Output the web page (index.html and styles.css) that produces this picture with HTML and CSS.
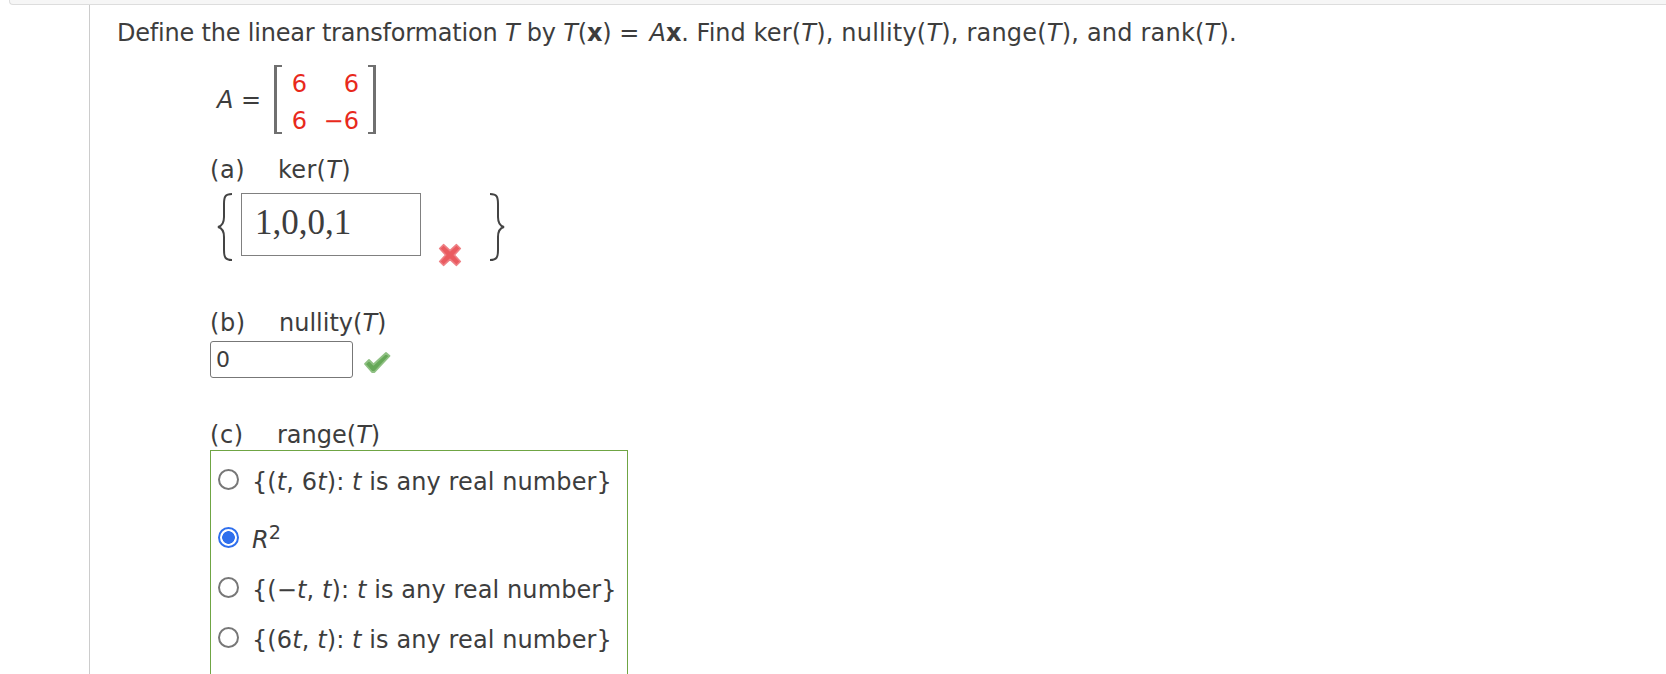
FILE: index.html
```html
<!DOCTYPE html>
<html lang="en">
<head>
    <meta charset="UTF-8">
    <title>Linear transformation</title>
    <link rel="stylesheet" href="styles.css">
</head>
<body>
    <div class="top-strip"></div>
    <main class="question">
        <p class="prompt"><span class="tight">Define the linear transformation <i>T</i> by <i>T</i>(<b>x</b>)</span><span class="eq">=</span><i>A</i><b>x</b>. Find <span class="loose">ker(<i>T</i>), nullity(<i>T</i>), range(<i>T</i>), and rank(<i>T</i>).</span></p>

        <div class="matrix-row">
            <span class="matrix-name"><i>A</i> =</span>
            <div class="matrix">
                <span>6</span><span>6</span>
                <span>6</span><span>&minus;6</span>
            </div>
        </div>

        <p class="part part-a"><span class="part-letter">(a)</span><span class="part-name">ker(<i>T</i>)</span></p>
        <div class="set-row">
            <svg class="brace" viewBox="0 0 16 68" width="16" height="68">
                <path d="M15 1C8 1 7 4 7 11V24C7 30 5 33 1 34C5 35 7 38 7 44V57C7 64 8 67 15 67" fill="none" stroke="#444" stroke-width="2"/>
            </svg>
            <input class="answer-big" type="text" value="1,0,0,1">
            <svg class="mark-x" viewBox="0 0 24 24" width="26" height="26">
                <path d="M2.500 6L6 2.500L12 8L18 2.500L21.500 6L16 12L21.500 18L18 21.500L12 16L6 21.500L2.500 18L8 12Z" fill="#ea5b60" stroke="#ee7f84" stroke-width="1.500" stroke-linejoin="round"/>
            </svg>
            <svg class="brace brace-right" viewBox="0 0 16 68" width="16" height="68">
                <path d="M1 1C8 1 9 4 9 11V24C9 30 11 33 15 34C11 35 9 38 9 44V57C9 64 8 67 1 67" fill="none" stroke="#444" stroke-width="2"/>
            </svg>
        </div>

        <p class="part part-b"><span class="part-letter">(b)</span>nullity(<i>T</i>)</p>
        <div class="nullity-row">
            <input class="answer-small" type="text" value="0">
            <svg class="mark-check" viewBox="0 0 28 23" width="28" height="23">
                <path d="M2 13L6 9L10.500 13.500L23 2L26.500 5L11.500 21H9Z" fill="#66a858" stroke="#8fc083" stroke-width="1.800" stroke-linejoin="round"/>
            </svg>
        </div>

        <p class="part part-c"><span class="part-letter">(c)</span>range(<i>T</i>)</p>
        <div class="choices">
            <label class="choice"><input type="radio" name="range"><span>{(<i>t</i>, 6<i>t</i>): <i>t</i> is any real number}</span></label>
            <label class="choice choice-r"><input type="radio" name="range" checked><span><i>R</i><sup>2</sup></span></label>
            <label class="choice"><input type="radio" name="range"><span>{(&minus;<i>t</i>, <i>t</i>): <i>t</i> is any real number}</span></label>
            <label class="choice"><input type="radio" name="range"><span>{(6<i>t</i>, <i>t</i>): <i>t</i> is any real number}</span></label>
        </div>
    </main>
</body>
</html>
```

FILE: styles.css
```css
html {
    box-sizing: border-box;
    font-family: "DejaVu Sans", sans-serif;
    font-size: 24px;
    color: #3d3d3d;
}

*,
*:before,
*:after {
    box-sizing: inherit;
}

body {
    margin: 0;
    height: 100vh;
    overflow: hidden;
    background: #fff;
}

p {
    margin: 0;
}

.top-strip {
    height: 5px;
    margin-left: 9px;
    background: #f6f6f6;
    border-bottom: 1px solid #ddd;
    border-left: 1px solid #ddd;
    border-bottom-left-radius: 4px;
}

.question {
    margin-left: 89px;
    height: 669px;
    padding: 14px 0 0 27px;
    border-left: 1px solid #ccc;
}

.prompt {
    line-height: 28px;
}

.tight {
    letter-spacing: -.2px;
}

.eq {
    margin: 0 10px 0 8px;
}

.loose {
    letter-spacing: .2px;
}

.matrix-row {
    display: flex;
    align-items: center;
    margin: 18px 0 0 100px;
}

.matrix-name {
    width: 57px;
}

.matrix {
    position: relative;
    display: grid;
    grid-template-columns: 33px 52px;
    justify-items: end;
    width: 102px;
    height: 69px;
    padding-top: 7px;
    line-height: 37px;
    color: #e8291c;
    align-content: center;
}

.matrix:before,
.matrix:after {
    content: "";
    position: absolute;
    top: 0;
    bottom: 0;
    width: 8px;
    border: solid #707070;
    border-width: 2px 0 2px 3px;
}

.matrix:before {
    left: 0;
}

.matrix:after {
    right: 0;
    border-width: 2px 3px 2px 0;
}

.part {
    line-height: 28px;
    margin-left: 93px;
}

.part-letter {
    display: inline-block;
    letter-spacing: .6px;
}

.part-name {
    letter-spacing: .3px;
}

.part-a {
    margin-top: 22px;
}

.part-a .part-letter {
    width: 68px;
}

.part-b .part-letter {
    width: 69px;
}

.part-c .part-letter {
    width: 67px;
}

.set-row {
    display: flex;
    align-items: flex-start;
    margin: 9px 0 0 100px;
}

.answer-big {
    width: 180px;
    height: 63px;
    margin-left: 8px;
    padding: 0 0 4px 13px;
    border: 1px solid #808080;
    border-radius: 0;
    font-family: "Liberation Serif", serif;
    font-size: 35px;
    color: #3d3d3d;
}

.mark-x {
    margin: 49px 0 0 16px;
}

.brace-right {
    margin-left: 26px;
}

.part-b {
    margin-top: 41px;
}

.nullity-row {
    display: flex;
    align-items: flex-end;
    margin: 4px 0 0 93px;
}

.answer-small {
    width: 143px;
    height: 37px;
    padding: 0 0 0 5px;
    border: 1px solid #777;
    border-radius: 3px;
    font-family: "DejaVu Sans", sans-serif;
    font-size: 22px;
    color: #3d3d3d;
}

.mark-check {
    margin: 0 0 4px 10px;
}

.part-c {
    margin-top: 43px;
}

.choices {
    width: 418px;
    height: 300px;
    margin: 1px 0 0 93px;
    padding-top: 6px;
    border: 1.5px solid #6fa544;
    letter-spacing: .1px;
}

.choice {
    display: flex;
    align-items: center;
    height: 50px;
    padding-left: 7px;
}

.choice-r {
    margin-top: 8px;
}

.choice input {
    appearance: none;
    width: 21px;
    height: 21px;
    margin: 0 13px 6px 0;
    border: 2px solid #777;
    border-radius: 50%;
    background: #fff;
}

.choice input:checked {
    border: 2px solid #2f6fed;
    background: radial-gradient(circle, #2f6fed 0 6px, #fff 6.600px);
}

sup {
    font-size: 80%;
    line-height: 0;
}
```
